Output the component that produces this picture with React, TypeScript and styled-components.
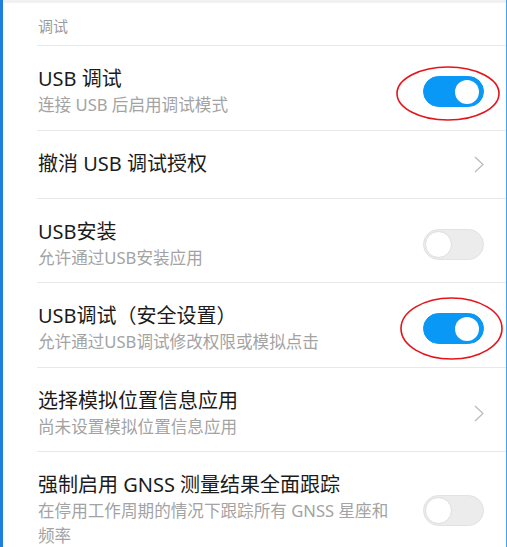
import React from "react";
import styled, { createGlobalStyle } from "styled-components";

const Global = createGlobalStyle`
  html, body { margin: 0; padding: 0; background: #ffffff; }
  body { font-family: "Noto Sans", "Noto Sans CJK SC", sans-serif; }
`;

const Frame = styled.div`
  width: 507px;
  height: 547px;
  box-sizing: border-box;
  border-left: 3px solid #1f7fe0;
  border-right: 1px solid #3ea3f4;
  background: #ffffff;
  overflow: hidden;
  display: flex;
  flex-direction: column;
`;

const TopEdge = styled.div`
  height: 3px;
  background: #f1f1f1;
  flex-shrink: 0;
`;

const SectionHeader = styled.div`
  height: 42px;
  flex-shrink: 0;
  padding-left: 35px;
  padding-top: 3px;
  display: flex;
  align-items: center;
  font-size: 15px;
  color: #9b9b9b;
  box-sizing: border-box;
`;

const Row = styled.div<{ $single?: boolean }>`
  margin-left: 34px;
  border-top: 1px solid #e8e8e8;
  padding: ${(p) => (p.$single ? "0" : "20px")} 22px ${(p) => (p.$single ? "0" : "12.5px")} 1px;
  min-height: ${(p) => (p.$single ? "67px" : "0")};
  display: flex;
  align-items: center;
  gap: 28px;
  flex-shrink: 0;
`;

const TextCol = styled.div`
  flex: 1;
  min-width: 0;
  display: flex;
  flex-direction: column;
`;

const Title = styled.div`
  font-size: 20px;
  line-height: 26px;
  height: 26px;
  white-space: nowrap;
  color: #1b1b1b;
`;

const Subtitle = styled.div`
  font-size: 16.6px;
  line-height: 25px;
  color: #a3a3a3;
`;

const ToggleWrap = styled.div`
  position: relative;
  flex-shrink: 0;
`;

const Track = styled.div<{ $on: boolean }>`
  width: 61px;
  height: 31px;
  box-sizing: border-box;
  border-radius: 16px;
  background: ${(p) => (p.$on ? "#0a98f7" : "#ececec")};
  border: 1px solid ${(p) => (p.$on ? "#0a98f7" : "#e2e2e2")};
  display: flex;
  align-items: center;
  justify-content: ${(p) => (p.$on ? "flex-end" : "flex-start")};
  padding: 0 ${(p) => (p.$on ? "4px" : "1px")};
`;

const Knob = styled.div<{ $on: boolean }>`
  width: ${(p) => (p.$on ? "24px" : "27px")};
  height: ${(p) => (p.$on ? "24px" : "27px")};
  border-radius: 50%;
  background: #ffffff;
  box-sizing: border-box;
  border: ${(p) => (p.$on ? "none" : "1px solid #dddddd")};
`;

const Ring = styled.svg<{ $left: number; $top: number }>`
  position: absolute;
  left: ${(p) => p.$left}px;
  top: ${(p) => p.$top}px;
  overflow: visible;
  pointer-events: none;
`;

const Chevron = styled.svg`
  flex-shrink: 0;
  display: block;
`;

type RingSpec = { left: number; top: number; w: number; h: number };

function Toggle({ on, ring }: { on: boolean; ring?: RingSpec }) {
  return (
    <ToggleWrap>
      <Track $on={on}>
        <Knob $on={on} />
      </Track>
      {ring && (
        <Ring $left={ring.left} $top={ring.top} width={ring.w} height={ring.h}>
          <ellipse
            cx={ring.w / 2}
            cy={ring.h / 2}
            rx={ring.w / 2 - 1}
            ry={ring.h / 2 - 1}
            fill="none"
            stroke="#e5141a"
            strokeWidth="1.6"
          />
        </Ring>
      )}
    </ToggleWrap>
  );
}

function Arrow() {
  return (
    <Chevron width="10" height="17" viewBox="0 0 10 17">
      <polyline points="1,1 9,8.5 1,16" fill="none" stroke="#b9b9b9" strokeWidth="1.2" />
    </Chevron>
  );
}

export default function App() {
  return (
    <>
      <Global />
      <Frame>
        <TopEdge />
        <SectionHeader>调试</SectionHeader>
        <Row>
          <TextCol>
            <Title>USB 调试</Title>
            <Subtitle>连接 USB 后启用调试模式</Subtitle>
          </TextCol>
          <Toggle on ring={{ left: -27, top: -10, w: 104, h: 55 }} />
        </Row>
        <Row $single>
          <TextCol>
            <Title>撤消 USB 调试授权</Title>
          </TextCol>
          <Arrow />
        </Row>
        <Row>
          <TextCol>
            <Title>USB安装</Title>
            <Subtitle>允许通过USB安装应用</Subtitle>
          </TextCol>
          <Toggle on={false} />
        </Row>
        <Row>
          <TextCol>
            <Title>USB调试（安全设置）</Title>
            <Subtitle>允许通过USB调试修改权限或模拟点击</Subtitle>
          </TextCol>
          <Toggle on ring={{ left: -23, top: -16, w: 103, h: 63 }} />
        </Row>
        <Row>
          <TextCol>
            <Title>选择模拟位置信息应用</Title>
            <Subtitle>尚未设置模拟位置信息应用</Subtitle>
          </TextCol>
          <Arrow />
        </Row>
        <Row>
          <TextCol>
            <Title>强制启用 GNSS 测量结果全面跟踪</Title>
            <Subtitle>在停用工作周期的情况下跟踪所有 GNSS 星座和频率</Subtitle>
          </TextCol>
          <Toggle on={false} />
        </Row>
      </Frame>
    </>
  );
}
